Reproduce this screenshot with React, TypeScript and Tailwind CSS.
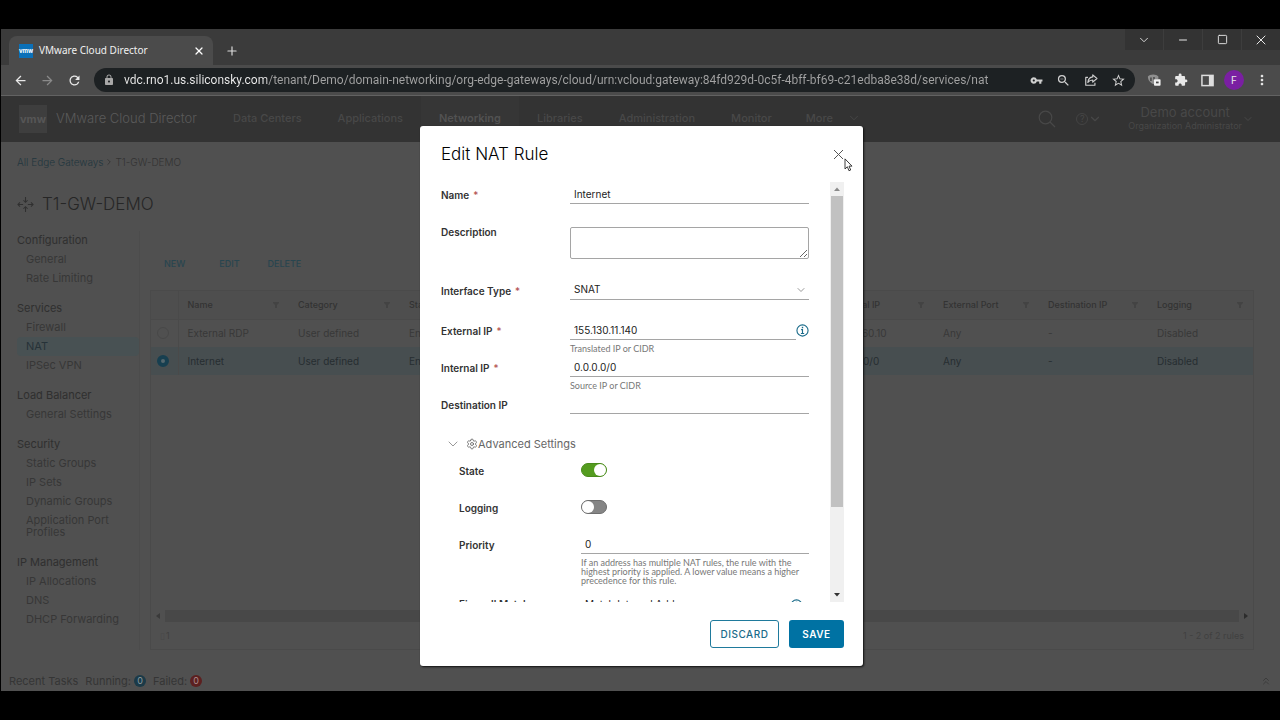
import { useState, type ReactNode } from "react";
import { ChevronDown, ChevronRight, ChevronsUp, Minus, Plus, Settings, Square, X } from "lucide-react";
import {
  MdArrowBack,
  MdArrowForward,
  MdExtension,
  MdLock,
  MdMoreVert,
  MdRefresh,
  MdStarBorder,
  MdVpnKey,
  MdZoomOut,
} from "react-icons/md";

const navItems = ["Data Centers", "Applications", "Networking", "Libraries", "Administration", "Monitor"];

const sections = [
  { title: "Configuration", items: ["General", "Rate Limiting"] },
  { title: "Services", items: ["Firewall", "NAT", "IPSec VPN"] },
  { title: "Load Balancer", items: ["General Settings"] },
  { title: "Security", items: ["Static Groups", "IP Sets", "Dynamic Groups", "Application Port Profiles"] },
  { title: "IP Management", items: ["IP Allocations", "DNS", "DHCP Forwarding"] },
];

const columns = [
  { title: "Name", width: "w-[111px]" },
  { title: "Category", width: "w-[111px]" },
  { title: "State", width: "w-[100px]" },
  { title: "NAT Action", width: "w-[100px]" },
  { title: "External IP", width: "" },
  { title: "Internal IP", width: "w-[106px]" },
  { title: "External Port", width: "w-[105px]" },
  { title: "Destination IP", width: "w-[109px]" },
  { title: "Logging", width: "w-[105px]" },
];

const rules = [
  ["External RDP", "User defined", "Enabled", "DNAT", "155.130.11.140", "10.10.60.10", "Any", "-", "Disabled"],
  ["Internet", "User defined", "Enabled", "SNAT", "155.130.11.140", "0.0.0.0/0", "Any", "-", "Disabled"],
];

function ShareIcon() {
  return (
    <svg viewBox="0 0 16 16" className="size-[14px]" fill="none" stroke="currentColor" strokeWidth="1.3" strokeLinejoin="round">
      <path d="M4.500 5H2v9h10.500v-3" />
      <path d="M10 2.200 14.800 6.300 10 10.400V8C7.500 8 5.800 8.800 4.400 10.800 4.800 7.300 6.500 4.900 10 4.500Z" />
    </svg>
  );
}

function PrivacyIcon() {
  return (
    <svg viewBox="0 0 16 16" className="size-[14px]">
      <path d="M1 4C3 .8 11 .8 13 4v3H9v6C4 12.500 1 8 1 4Z" fill="#8f8f8f" />
      <path d="M4.500 5v4M8 4.500v3" stroke="#4a4a4a" strokeWidth="1.800" />
      <rect x="8" y="7" width="7.500" height="7.500" rx="1" fill="#f1f1f1" />
      <path d="M10.300 9.800h3v2h-3z" fill="#444" />
    </svg>
  );
}

function SidePanelIcon() {
  return (
    <svg viewBox="0 0 14 14" className="size-[13px]">
      <rect x="1" y="1.500" width="12" height="11" fill="none" stroke="#dedede" strokeWidth="1.600" />
      <rect x="8.500" y="1.500" width="4.500" height="11" fill="#dedede" />
    </svg>
  );
}

function GatewayIcon() {
  return (
    <svg viewBox="0 0 18 18" className="size-[17px]" fill="none" stroke="currentColor" strokeWidth="1.100">
      <path d="M9 1v5.500M6.800 4.500 9 6.700l2.200-2.200M9 17v-5.500M6.800 13.500 9 11.300l2.200 2.200" />
      <path d="M6.500 9H1M3.200 6.800 1 9l2.200 2.200M11.500 9H17M14.800 6.800 17 9l-2.200 2.200" />
    </svg>
  );
}

function CloseIcon() {
  return (
    <svg viewBox="0 0 11 11" className="size-[11px]" fill="none" stroke="currentColor" strokeWidth="1">
      <path d="m1 1 9 9M10 1 1 10" />
    </svg>
  );
}

function FilterIcon() {
  return (
    <svg viewBox="0 0 8 8" className="size-2 shrink-0" fill="#434343">
      <path d="M1 1h6v1L5 4v3H3V4L1 2Z" />
    </svg>
  );
}

function SearchIcon() {
  return (
    <svg viewBox="0 0 18 18" className="size-[18px]" fill="none" stroke="currentColor" strokeWidth="1.200">
      <circle cx="7.500" cy="7.500" r="6.300" />
      <path d="m12 12 5 5" />
    </svg>
  );
}

function InfoButton({ label }: { label: string }) {
  return (
    <button type="button" aria-label={label} className="shrink-0 text-[#1a6b8a]">
      <svg viewBox="0 0 14 14" className="size-[13px]" fill="none" stroke="currentColor" strokeWidth="1.200">
        <circle cx="7" cy="7" r="6" />
        <path d="M7 3v1.600" strokeWidth="1.500" />
        <path d="M5.500 6H7v4M5.300 10.200h3.500" />
      </svg>
    </button>
  );
}

function Row({ id, label, required, indent, children }: { id: string; label: string; required?: boolean; indent?: boolean; children: ReactNode }) {
  return (
    <div className="flex items-start">
      <label
        htmlFor={id}
        className={indent ? "w-[140px] shrink-0 pl-[18px] text-[10px] leading-[22px] font-semibold text-[#333]" : "w-[129px] shrink-0 text-[10px] leading-[22px] font-semibold text-[#333]"}
      >
        {label}
        {required && <span className="ml-1 font-normal text-[#b04a4a]">*</span>}
      </label>
      <div className="min-w-0 flex-1">{children}</div>
    </div>
  );
}

const field = "block h-5 w-full border-b border-[#a5a5a5] bg-transparent pl-1 text-[10px] text-[#222] outline-none";
const helper = "font-['Lato',sans-serif] text-[9px] text-[#777]";

function Toggle({ id, on }: { id: string; on: boolean }) {
  const [checked, setChecked] = useState(on);
  return (
    <div className="flex h-5 items-center">
      <input
        id={id}
        type="checkbox"
        role="switch"
        checked={checked}
        onChange={(e) => setChecked(e.target.checked)}
        className="h-[14px] w-[26px] appearance-none rounded-full border border-[#6e6e6e] bg-[#858585] before:block before:size-3 before:rounded-full before:bg-white checked:border-[#4a8a1c] checked:bg-[#549c1f] checked:before:ml-3"
      />
    </div>
  );
}

function BrowserChrome() {
  return (
    <>
      <div className="flex h-9 items-start justify-between bg-[#3b3b3b]">
        <div className="flex items-center pt-[7px] pl-2">
          <div className="flex h-[29px] w-[204px] items-center rounded-t-lg bg-[#4b4b4b] pr-2 pl-[10px] text-white">
            <span className="flex size-[14px] items-center justify-center bg-[#0b70b8] text-[6px] font-bold">vmw</span>
            <span className="ml-[6px] flex-1 font-['Noto_Sans',sans-serif] text-[10px] text-[#f0f0f0]">VMware Cloud Director</span>
            <button aria-label="Close tab"><X className="size-3" strokeWidth={2.500} /></button>
          </div>
          <button aria-label="New tab" className="ml-3 text-[#dcdcdc]"><Plus className="size-[14px]" /></button>
        </div>
        <div className="flex h-[21px] bg-[#333] text-[#e8e8e8]">
          <button aria-label="Search tabs" className="flex w-[38px] items-center justify-center"><ChevronDown className="size-[14px]" strokeWidth={1.500} /></button>
          <button aria-label="Minimize" className="flex w-[39px] items-center justify-center border-l border-[#3d3d3d]"><Minus className="size-3" strokeWidth={2} /></button>
          <button aria-label="Maximize" className="flex w-[39px] items-center justify-center border-l border-[#3d3d3d]"><Square className="size-[11px]" strokeWidth={2} /></button>
          <button aria-label="Close window" className="flex w-[39px] items-center justify-center border-l border-[#3d3d3d]"><X className="size-4" strokeWidth={1.500} /></button>
        </div>
      </div>
      <div className="flex h-[31px] items-center border-b border-[#626262] bg-[#4b4b4b] pl-3 text-[15px] text-[#e8e8e8]">
        <button aria-label="Back"><MdArrowBack /></button>
        <button aria-label="Forward" className="ml-3 text-[#8a8a8a]"><MdArrowForward /></button>
        <button aria-label="Reload" className="ml-3"><MdRefresh /></button>
        <div className="ml-3 flex h-6 min-w-0 flex-1 items-center gap-[13px] rounded-full bg-[#1d2123] pr-[9px] pl-[9px] text-[#d0d0d0]">
          <MdLock className="size-3 shrink-0 text-[#a8a8a8]" />
          <input
            aria-label="Address"
            defaultValue="vdc.rno1.us.siliconsky.com/tenant/Demo/domain-networking/org-edge-gateways/cloud/urn:vcloud:gateway:84fd929d-0c5f-4bff-bf69-c21edba8e38d/services/nat"
            className="-ml-1 h-6 min-w-0 flex-1 bg-[linear-gradient(90deg,#f0f0f0_143px,#a3a3a3_143px)] bg-clip-text font-['Roboto',sans-serif] text-[12px] text-transparent outline-none"
          />
          <button aria-label="Saved passwords"><MdVpnKey className="size-[13px]" /></button>
          <button aria-label="Zoom"><MdZoomOut className="size-[15px]" /></button>
          <button aria-label="Share"><ShareIcon /></button>
          <button aria-label="Bookmark"><MdStarBorder className="size-[15px]" /></button>
        </div>
        <div className="flex items-center gap-[13px] pr-[10px] pl-3">
          <button aria-label="Privacy extension"><PrivacyIcon /></button>
          <button aria-label="Extensions"><MdExtension className="size-[14px]" /></button>
          <button aria-label="Side panel"><SidePanelIcon /></button>
          <button aria-label="Profile" className="-mx-[3px] size-5 rounded-full bg-[#7a1fa2] text-[10px]">F</button>
          <button aria-label="Browser menu"><MdMoreVert className="size-4" /></button>
        </div>
      </div>
    </>
  );
}

function AppHeader() {
  return (
    <header className="flex h-[46px] items-center bg-[#333] pl-[18px] text-[#484848]">
      <span className="flex size-7 items-center justify-center bg-[#3e3e3e] text-[11px] font-bold text-[#565656]">vmw</span>
      <span className="ml-[9px] w-[159px] text-[13px] font-light text-[#5a5a5a]">VMware Cloud Director</span>
      <nav className="flex h-full items-center text-[11px] leading-4 font-medium">
        {navItems.map((item) => (
          <a
            key={item}
            href="#"
            className={item === "Networking" ? "flex h-full items-center bg-[#363636] px-[18px] pb-[2px] font-semibold text-[#525252]" : "flex h-full items-center px-[18px] pb-[2px]"}
          >
            {item}
          </a>
        ))}
        <button className="flex items-center gap-[14px] px-4 pb-[2px]">More <ChevronDown className="size-[14px]" strokeWidth={1.500} /></button>
      </nav>
      <div className="ml-auto flex items-center pr-[26px]">
        <button aria-label="Search"><SearchIcon /></button>
        <button aria-label="Help" className="ml-5 flex items-center text-[9px]">
          <span className="flex size-3 items-center justify-center rounded-full border border-[#444]">?</span>
          <ChevronDown className="size-[14px]" />
        </button>
        <button className="ml-[26px] flex items-center">
          <span className="flex flex-col items-center pb-[2px]">
            <span className="text-[13px] leading-4">Demo account</span>
            <span className="text-[9px] leading-3">Organization Administrator</span>
          </span>
          <ChevronDown className="size-3" />
        </button>
      </div>
    </header>
  );
}

function Sidebar() {
  return (
    <nav className="mr-[10px] flex w-[123px] shrink-0 flex-col gap-[11px] border-r border-[#4c4c4c] text-[11px] text-[#373737]">
      {sections.map((section) => (
        <section key={section.title}>
          <h2 className="leading-[19px] text-[#2f2f2f]">{section.title}</h2>
          <ul>
            {section.items.map((item) => (
              <li key={item} className={item === "NAT" ? "rounded-sm bg-[#485153] pl-[9px] text-[#263238]" : "pl-[9px]"}>
                <a href="#" className="block w-[98px] pt-[3px] pb-1 leading-3">{item}</a>
              </li>
            ))}
          </ul>
        </section>
      ))}
    </nav>
  );
}

function RulesTable() {
  const [selected, setSelected] = useState(1);
  return (
    <div className="flex min-w-0 flex-1 flex-col">
      <div className="flex gap-[34px] px-[14px] pt-[25px] text-[9px] leading-4 font-medium text-[#28454f]">
        <button>NEW</button>
        <button>EDIT</button>
        <button className="-ml-[6px]">DELETE</button>
      </div>
      <div className="mt-[18px] flex h-[360px] flex-col border border-[#4a4a4a]">
        <table className="w-full table-fixed border-collapse text-left text-[10px] text-[#383838]">
          <thead>
            <tr className="h-7 border-b border-[#4a4a4a] bg-[#4e4e4e] text-[9px] text-[#333]">
              <th aria-label="Select" className="w-[27px] border-r border-[#4a4a4a]" />
              {columns.map((c) => (
                <th key={c.title} className={`${c.width} px-[9px] font-medium whitespace-nowrap`}>
                  <div className="flex items-center justify-between">
                    {c.title}
                    <FilterIcon />
                  </div>
                </th>
              ))}
            </tr>
          </thead>
          <tbody>
            {rules.map((rule, i) => (
              <tr key={rule[0]} className={selected === i ? "h-7 bg-[#474e50] text-[#262d30]" : "h-7"}>
                <td className="border-r border-[#4a4a4a] pl-[6px]">
                  <input
                    type="radio"
                    name="rule"
                    aria-label={rule[0]}
                    checked={selected === i}
                    onChange={() => setSelected(i)}
                    className="block size-3 appearance-none rounded-full border border-[#484848] checked:border-[4px] checked:border-[#173f50] checked:bg-[#55676e]"
                  />
                </td>
                {rule.map((cell, j) => (
                  <td key={j} className="px-[9px] whitespace-nowrap">{cell}</td>
                ))}
              </tr>
            ))}
          </tbody>
        </table>
        <div className="mt-auto flex h-[13px] items-center gap-[5px] px-[5px] text-[#2c2c2c]">
          <svg viewBox="0 0 4 6" className="h-[6px] w-1" fill="#3a3a3a"><path d="M4 0v6L0 3Z" /></svg>
          <div className="h-3 flex-1 bg-[#484848]" />
          <svg viewBox="0 0 4 6" className="h-[6px] w-1" fill="currentColor"><path d="M0 0v6l4-3Z" /></svg>
        </div>
        <div className="flex h-[27px] items-center justify-between px-[9px] text-[9px] text-[#404040]">
          <span className="flex gap-px"><span className="text-[#484848]">▯</span>1</span>
          <span>1 - 2 of 2 rules</span>
        </div>
      </div>
    </div>
  );
}

function EditDialog() {
  return (
    <div role="dialog" aria-labelledby="dialog-title" className="flex w-[443px] flex-col rounded-[3px] bg-white pt-4 pr-[19px] pb-[18px] pl-[21px] text-[#222] shadow-[1px_1px_2px_#111]">
      <div className="flex h-6 items-center justify-between">
        <h1 id="dialog-title" className="text-[17px] leading-6 font-light text-black">Edit NAT Rule</h1>
        <button aria-label="Close" className="text-[#555]"><CloseIcon /></button>
      </div>
      <form className="mt-4 flex h-[420px] justify-between">
        <div className="w-[368px] overflow-hidden pt-[2px]">
          <Row id="name" label="Name" required>
            <input id="name" defaultValue="Internet" className={field} />
          </Row>
          <div className="mt-[15px]">
            <Row id="description" label="Description">
              <textarea id="description" className="mt-[6px] block h-8 w-full resize rounded-[2px] border border-[#a5a5a5] outline-none" />
            </Row>
          </div>
          <div className="mt-[21px]">
            <Row id="type" label="Interface Type" required>
              <div className="grid items-center">
                <select id="type" defaultValue="SNAT" className={`${field} col-start-1 row-start-1 appearance-none`}>
                  <option>SNAT</option>
                  <option>DNAT</option>
                </select>
                <ChevronDown className="pointer-events-none col-start-1 row-start-1 mr-[2px] size-3 justify-self-end text-[#999]" strokeWidth={2} />
              </div>
            </Row>
          </div>
          <div className="mt-[18px]">
            <Row id="external" label="External IP" required>
              <div className="flex items-center">
                <input id="external" defaultValue="155.130.11.140" className={field} />
                <InfoButton label="About external IP" />
              </div>
              <p className={`${helper} h-[17px] leading-[17px]`}>Translated IP or CIDR</p>
            </Row>
          </div>
          <Row id="internal" label="Internal IP" required>
            <input id="internal" defaultValue="0.0.0.0/0" className={field} />
            <p className={`${helper} h-[17px] leading-[17px]`}>Source IP or CIDR</p>
          </Row>
          <Row id="destination" label="Destination IP">
            <input id="destination" className={field} />
          </Row>
          <button type="button" className="mt-[18px] flex h-5 items-center pl-1 text-[11px] text-[#666]">
            <ChevronDown className="mr-[5px] size-4 text-[#999]" strokeWidth={1.500} />
            <Settings className="size-3" strokeWidth={1.700} />
            Advanced Settings
          </button>
          <div className="mt-[6px] flex flex-col gap-[15px]">
            <Row id="state" label="State" indent><Toggle id="state" on /></Row>
            <Row id="logging" label="Logging" indent><Toggle id="logging" on={false} /></Row>
            <Row id="priority" label="Priority" indent>
              <input id="priority" defaultValue="0" className={field} />
              <p className={`${helper} pt-1 leading-[9px]`}>
                If an address has multiple NAT rules, the rule with the highest priority is applied. A lower value means a higher precedence for this rule.
              </p>
            </Row>
          </div>
          <div className="mt-2">
            <Row id="match" label="Firewall Match" indent>
              <div className="flex items-center pt-[2px] pr-[6px]">
                <select id="match" className={`${field} appearance-none`}>
                  <option>Match Internal Address</option>
                </select>
                <InfoButton label="About firewall match" />
              </div>
            </Row>
          </div>
        </div>
        <div className="flex w-[14px] flex-col items-center bg-[#f0f0f0]">
          <svg viewBox="0 0 14 14" className="size-[14px]"><path d="M4 9h6L7 5.500Z" fill="#8a8a8a" /></svg>
          <div className="h-[311px] w-3 bg-[#c1c1c1]" />
          <svg viewBox="0 0 14 14" className="mt-auto size-[14px]"><path d="M4 5h6L7 8.500Z" fill="#333" /></svg>
        </div>
      </form>
      <div className="mt-[18px] flex justify-end gap-[10px] text-[10px] font-semibold tracking-wider">
        <button className="h-7 w-[69px] rounded-[3px] border border-[#1f7a9c] font-medium text-[#1a6b8a]">DISCARD</button>
        <button className="h-7 w-[55px] rounded-[3px] bg-[#0072a3] text-white">SAVE</button>
      </div>
    </div>
  );
}

export default function App() {
  return (
    <div className="flex min-h-screen flex-col bg-black py-[29px] pl-px font-['Inter',sans-serif]">
      <BrowserChrome />
      <div className="relative flex flex-1 flex-col bg-[#505050]">
        <AppHeader />
        <main className="flex flex-1 flex-col pt-3 pl-4">
          <div className="flex items-center text-[10px] leading-4 font-light text-[#333]">
            <a href="#" className="text-[#22363e]">All Edge Gateways</a>
            <ChevronRight className="mx-px size-[10px]" />
            <span>T1-GW-DEMO</span>
          </div>
          <div className="mt-[22px] flex items-center gap-2 text-[#303030]">
            <GatewayIcon />
            <h1 className="text-[17px] leading-6 font-light text-[#262626]">T1-GW-DEMO</h1>
          </div>
          <div className="mt-[15px] flex pr-[26px]">
            <Sidebar />
            <RulesTable />
          </div>
          <footer className="mt-auto -ml-2 flex h-5 items-center gap-[7px] pr-2 text-[11px] text-[#353535]">
            <span>Recent Tasks</span>
            <span className="flex items-center gap-[3px]">Running: <span className="flex size-3 items-center justify-center rounded-full bg-[#1b3a48] text-[9px] text-[#8a9aa0]">0</span></span>
            <span className="flex items-center gap-[3px]">Failed: <span className="flex size-3 items-center justify-center rounded-full bg-[#5c2020] text-[9px] text-[#a98c8c]">0</span></span>
            <button aria-label="Expand tasks" className="ml-auto"><ChevronsUp className="size-3" strokeWidth={1.500} /></button>
          </footer>
        </main>
        <div className="absolute inset-0 flex items-start justify-center pt-[30px] pl-[2px]">
          <EditDialog />
        </div>
        <svg viewBox="0 0 10 16" className="pointer-events-none absolute top-[62px] left-1/2 ml-[203px] h-[14px] w-[9px]" fill="white" stroke="#222" strokeWidth="1">
          <path d="M1 1v11.500l2.700-2.500 1.800 4.500 2-.8-1.900-4.400H9Z" />
        </svg>
      </div>
    </div>
  );
}
